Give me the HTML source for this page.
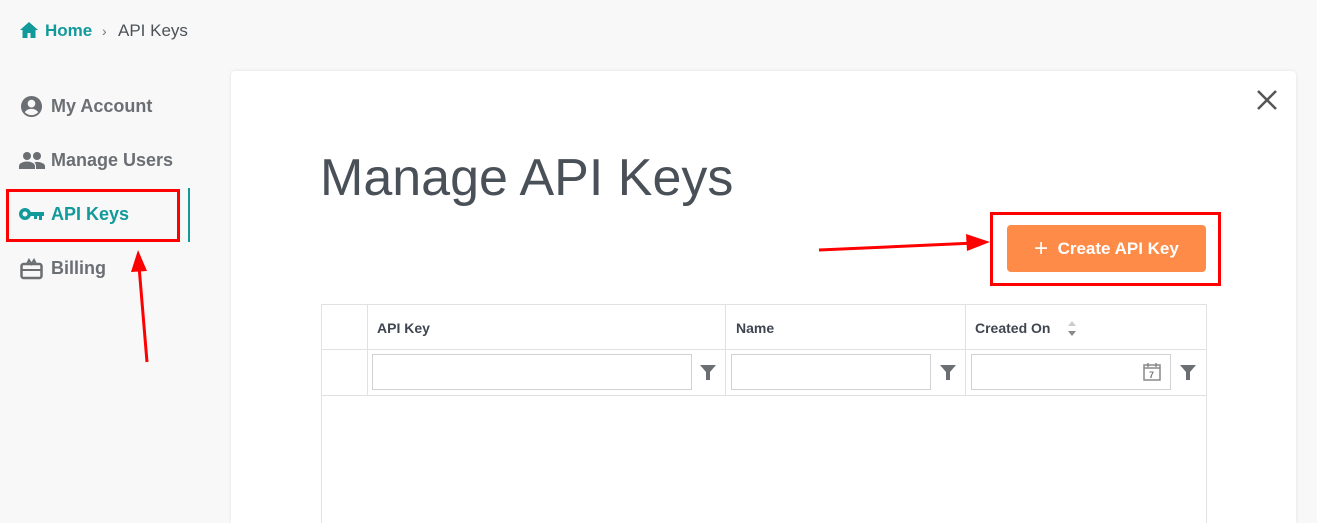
<!DOCTYPE html>
<html><head><style>
html,body{margin:0;width:1317px;height:523px;overflow:hidden}
body{background:#f8f8f8;font-family:"Liberation Sans",sans-serif;position:relative}
.a{position:absolute}
.nav{font-size:18px;color:#6b6f73;font-weight:bold}
.card{left:231px;top:71px;width:1065px;height:452px;background:#fff;border-radius:4px 4px 0 0;box-shadow:0 0 3px rgba(0,0,0,.1)}
.th{font-size:14px;font-weight:bold;color:#3f4650}
.inp{border:1px solid #cfd3d6;height:36px;background:#fff;box-sizing:border-box}
.line{background:#dfe1e3}
</style></head><body>
<svg class="a" style="left:20px;top:22px" width="18" height="16" viewBox="0 0 18 16"><path d="M9 0L0 8h2.5v8h5v-5h3v5h5V8H18z" fill="#12999a"/></svg>
<div class="a" style="left:45px;top:21px;font-size:17px;color:#12999a;font-weight:bold">Home</div>
<div class="a" style="left:102px;top:23px;font-size:14px;color:#777">›</div>
<div class="a" style="left:118px;top:21px;font-size:17px;color:#4c5258">API Keys</div>

<svg class="a" style="left:20px;top:95px" width="23" height="23" viewBox="0 0 24 24"><circle cx="12" cy="12" r="11" fill="#6b6f73"/><circle cx="12" cy="9" r="4" fill="#f8f8f8"/><path d="M5 18c2-3 5-3.5 7-3.5s5 .5 7 3.5c-2 2-4.5 3-7 3s-5-1-7-3z" fill="#f8f8f8"/></svg>
<div class="a nav" style="left:51px;top:96px">My Account</div>
<svg class="a" style="left:19px;top:151px" width="26" height="18" viewBox="0 0 26 18"><circle cx="8" cy="5" r="4" fill="#6b6f73"/><circle cx="18" cy="5" r="4" fill="#6b6f73"/><path d="M0 18v-3c0-3 5-4.5 8-4.5s8 1.5 8 4.5v3zM17 18v-3c0-1.5-.5-2.5-1.5-3.5 1-.5 2-.6 2.5-.6 3 0 8 1.5 8 4.1v3z" fill="#6b6f73"/></svg>
<div class="a nav" style="left:51px;top:150px">Manage Users</div>
<svg class="a" style="left:19px;top:207px" width="25" height="14" viewBox="0 0 25 14"><circle cx="6" cy="7" r="6" fill="#12999a"/><circle cx="6" cy="7" r="2.5" fill="#f8f8f8"/><path d="M11 5h14v4h-2v4h-3V9h-2v3h-3V9h-4z" fill="#12999a"/></svg>
<div class="a nav" style="left:51px;top:204px;color:#12999a">API Keys</div>
<div class="a" style="left:6px;top:189px;width:168px;height:47px;border:3px solid #f00"></div>
<div class="a" style="left:188px;top:188px;width:2px;height:54px;background:#12999a"></div>
<svg class="a" style="left:20px;top:258px" width="23" height="22" viewBox="0 0 23 22"><rect x="1.5" y="6" width="20" height="14" rx="2" fill="none" stroke="#6b6f73" stroke-width="2.5"/><path d="M1.5 12h20" stroke="#6b6f73" stroke-width="2"/><path d="M7 6l2-4 2.5 4 2.5-4 2 4" fill="none" stroke="#6b6f73" stroke-width="2"/></svg>
<div class="a nav" style="left:51px;top:258px">Billing</div>

<div class="a card"></div>
<svg class="a" style="left:1256px;top:89px" width="22" height="22"><path d="M2 2L20 20M20 2L2 20" stroke="#555" stroke-width="2.5"/></svg>
<div class="a" style="left:320px;top:148px;font-size:52px;color:#4a5058">Manage API Keys</div>

<div class="a" style="left:990px;top:212px;width:225px;height:68px;border:3px solid #f00"></div>
<div class="a" style="left:1007px;top:225px;width:199px;height:47px;background:#fe8b47;border-radius:4px;color:#fff;font-size:17px;font-weight:bold;line-height:47px;text-align:center"><span style="font-size:24px;font-weight:normal;vertical-align:-2px">+</span>&nbsp; Create API Key</div>

<svg class="a" style="left:0;top:0" width="1317" height="523"><path d="M819 250L975 243" stroke="#f00" stroke-width="3"/><path d="M990 242L966 234L967 251z" fill="#f00"/><path d="M147 362L139 266" stroke="#f00" stroke-width="3"/><path d="M138 250L131 272L147 271z" fill="#f00"/></svg>

<div class="a" style="left:321px;top:304px;width:884px;height:219px;border:1px solid #dfe1e3;border-bottom:none;background:#fff"></div>
<div class="a line" style="left:321px;top:349px;width:885px;height:1px"></div>
<div class="a line" style="left:321px;top:395px;width:885px;height:1px"></div>
<div class="a line" style="left:367px;top:304px;width:1px;height:92px"></div>
<div class="a line" style="left:725px;top:304px;width:1px;height:92px"></div>
<div class="a line" style="left:965px;top:304px;width:1px;height:92px"></div>
<div class="a th" style="left:377px;top:320px">API Key</div>
<div class="a th" style="left:736px;top:320px">Name</div>
<div class="a th" style="left:975px;top:320px">Created On</div>
<svg class="a" style="left:1067px;top:320px" width="10" height="17"><path d="M5 1L9 6H1z" fill="#ccc"/><path d="M5 16L9 11H1z" fill="#888"/></svg>
<div class="a inp" style="left:372px;top:354px;width:320px"></div>
<div class="a inp" style="left:731px;top:354px;width:200px"></div>
<div class="a inp" style="left:971px;top:354px;width:200px"></div>
<svg class="a" style="left:700px;top:365px" width="16" height="15"><path d="M0 0h16L10 7v8H6V7z" fill="#6b6f73"/></svg>
<svg class="a" style="left:940px;top:365px" width="16" height="15"><path d="M0 0h16L10 7v8H6V7z" fill="#6b6f73"/></svg>
<svg class="a" style="left:1180px;top:365px" width="16" height="15"><path d="M0 0h16L10 7v8H6V7z" fill="#6b6f73"/></svg>
<svg class="a" style="left:1143px;top:362px" width="18" height="19"><rect x="1" y="3" width="16" height="15" fill="none" stroke="#888" stroke-width="1.5"/><path d="M1 6h16M5 1v4M13 1v4" stroke="#888" stroke-width="1.5"/><text x="6" y="16" font-size="9" font-weight="bold" fill="#777" font-family="Liberation Sans">7</text></svg>
</body></html>
